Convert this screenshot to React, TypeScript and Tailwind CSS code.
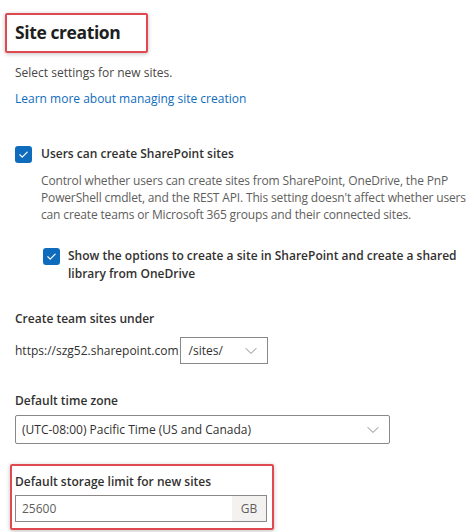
import React from 'react';

function CheckBox() {
  return (
    <span className="flex h-[17px] w-[17px] shrink-0 items-center justify-center rounded-[3px] bg-[#0f6cbd]">
      <svg width="11" height="11" viewBox="0 0 12 12" fill="none">
        <path d="M2 6.3l2.6 2.6L10 3.4" stroke="white" strokeWidth="1.3" strokeLinecap="round" strokeLinejoin="round" />
      </svg>
    </span>
  );
}

function Chevron() {
  return (
    <svg width="12" height="8" viewBox="0 0 12 8" fill="none">
      <path d="M1 1.5l5 5 5-5" stroke="#8a8886" strokeWidth="1" strokeLinecap="round" strokeLinejoin="round" />
    </svg>
  );
}

export default function App() {
  return (
    <div className="min-h-screen w-[474px] bg-white text-[12px] text-[#323130]" style={{ fontFamily: '"Open Sans", "Noto Sans", sans-serif' }}>
      {/* Title, outlined in red */}
      <div className="pt-[13px] pl-[5px]">
        <div className="flex h-[40px] w-[143px] items-center rounded-[2px] border-2 border-[#e0494f] pl-[8px] shadow-[0_1px_4px_rgba(0,0,0,0.25)]">
          <h1 className="text-[17.5px] font-bold leading-none tracking-[-0.4px] text-[#201f1e]">Site creation</h1>
        </div>
      </div>

      <div className="pl-[15px]">
        <p className="mt-[11px] leading-[18px] text-[#484644]">Select settings for new sites.</p>
        <a className="mt-[8px] block leading-[18px] text-[#0f6cbd]">Learn more about managing site creation</a>

        {/* Main checkbox */}
        <div className="mt-[38px] flex items-start gap-[9px]">
          <CheckBox />
          <div className="-mt-[1px]">
            <div className="font-semibold leading-[18px] text-[#323130]">Users can create SharePoint sites</div>
            <p className="mt-[9px] w-[432px] leading-[17px] tracking-[-0.15px] text-[#605e5c]">
              Control whether users can create sites from SharePoint, OneDrive, the PnP PowerShell cmdlet, and the REST API. This setting doesn't affect whether users can create teams or Microsoft 365 groups and their connected sites.
            </p>
          </div>
        </div>

        {/* Nested checkbox */}
        <div className="mt-[25px] ml-[28px] flex items-start gap-[8px]">
          <CheckBox />
          <div className="-mt-[1px] w-[390px] font-semibold leading-[18px] text-[#323130]">
            Show the options to create a site in SharePoint and create a shared library from OneDrive
          </div>
        </div>

        {/* Team sites path */}
        <div className="mt-[27px] font-semibold leading-[18px] text-[#323130]">Create team sites under</div>
        <div className="mt-[9px] flex items-center gap-[1px]">
          <span className="text-[#323130]">https://szg52.sharepoint.com</span>
          <div className="flex h-[27px] w-[88px] items-center justify-between border border-[#8a8886] pl-[8px] pr-[10px]">
            <span className="text-[#323130]">/sites/</span>
            <Chevron />
          </div>
        </div>

        {/* Time zone */}
        <div className="mt-[28px] font-semibold leading-[18px] text-[#323130]">Default time zone</div>
        <div className="mt-[5px] flex h-[29px] w-[375px] items-center justify-between rounded-[2px] border border-[#8a8886] pl-[6px] pr-[10px]">
          <span className="text-[#323130]">(UTC-08:00) Pacific Time (US and Canada)</span>
          <Chevron />
        </div>
      </div>

      {/* Storage limit, outlined in red */}
      <div className="mt-[20px] ml-[10px] w-[264px] rounded-[2px] border-2 border-[#e0494f] px-[3px] pt-[7px] pb-[6px] shadow-[0_1px_4px_rgba(0,0,0,0.25)]">
        <div className="font-semibold leading-[18px] text-[#323130]">Default storage limit for new sites</div>
        <div className="mt-[4px] flex h-[27px] w-[252px] items-stretch border border-[#8a8886]">
          <span className="flex flex-1 items-center pl-[6px] text-[#605e5c]">25600</span>
          <span className="flex w-[34px] items-center justify-center bg-[#f3f2f1] text-[#605e5c]">GB</span>
        </div>
      </div>
    </div>
  );
}
